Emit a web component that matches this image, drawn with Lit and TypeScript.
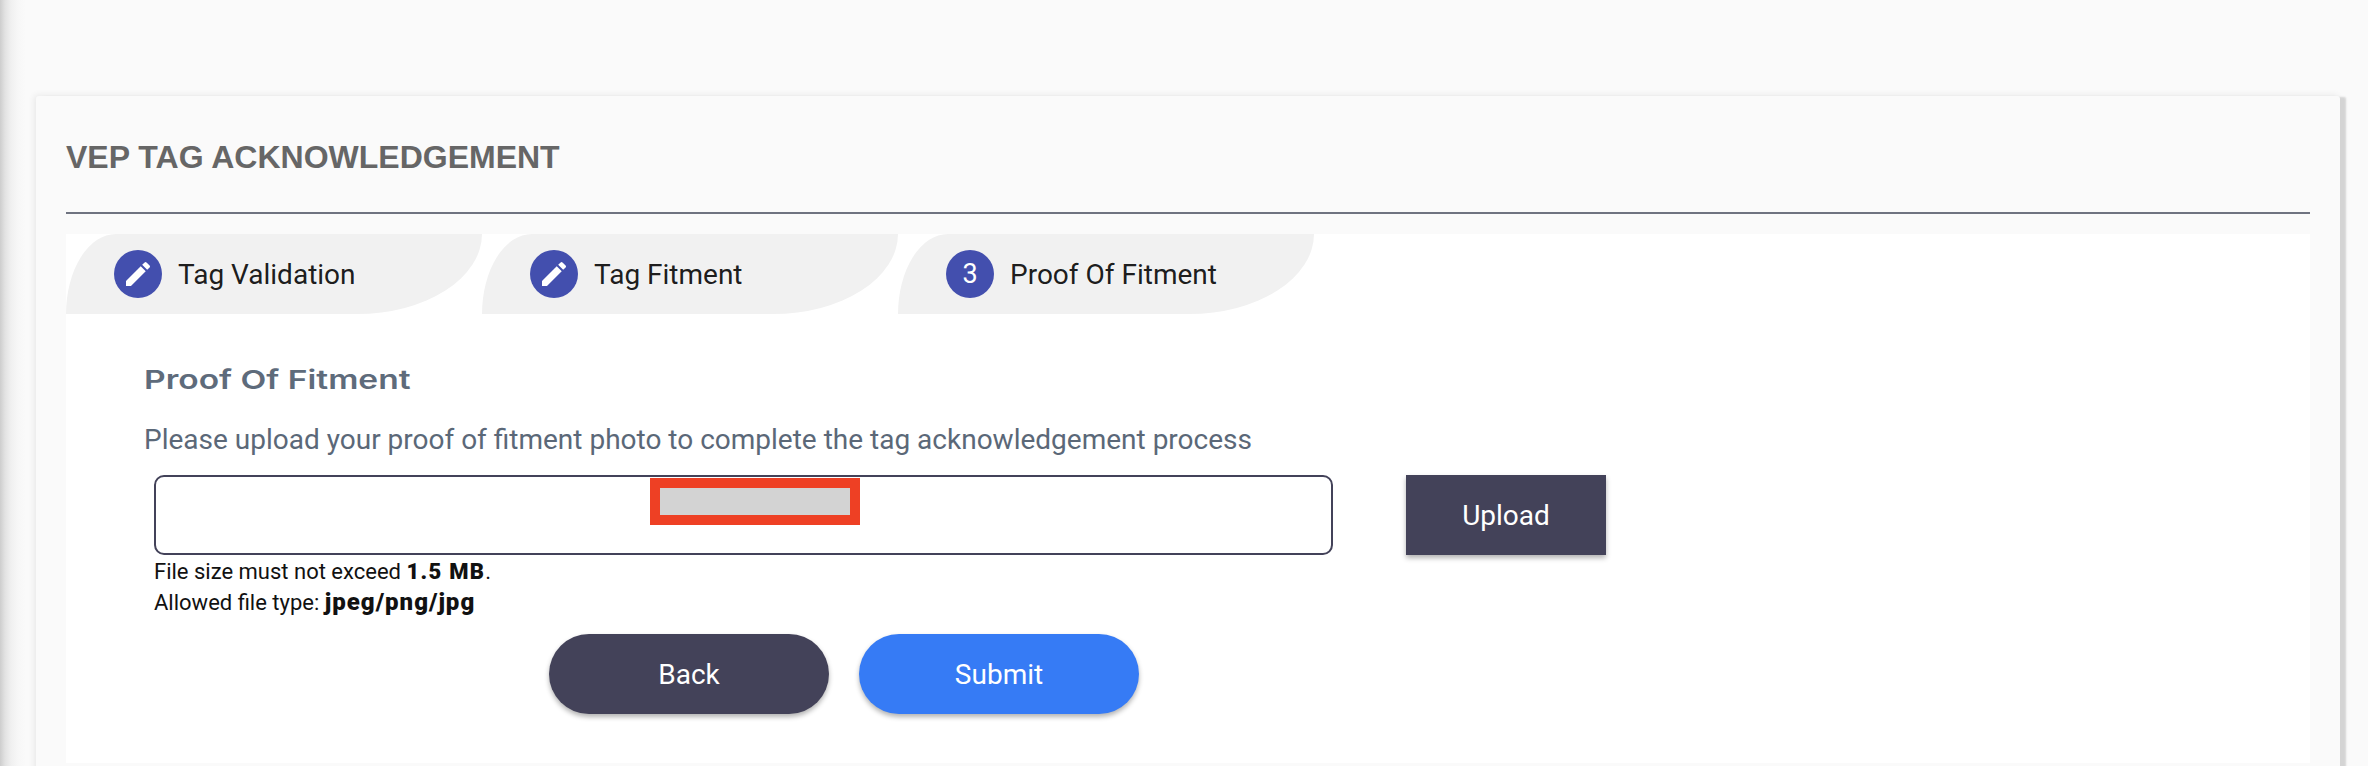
import { LitElement, html, css } from "lit";
import { customElement } from "lit/decorators.js";

const pencil = html`<svg viewBox="0 0 24 24" width="32" height="32"><path fill="#fff" d="M3 17.25V21h3.75L17.81 9.94l-3.75-3.75L3 17.25zM20.71 7.04a1 1 0 0 0 0-1.41l-2.34-2.34a1 1 0 0 0-1.41 0l-1.83 1.83 3.75 3.75 1.83-1.83z"/></svg>`;

@customElement("app-root")
export class AppRoot extends LitElement {
  static styles = css`
    :host { display: block; height: 766px; overflow: hidden; background: #fafafa; position: relative; font-family: Roboto, sans-serif; }
    .edge { position: absolute; left: 0; top: 0; bottom: 0; width: 26px; background: linear-gradient(90deg, #cdcdcd 0, #e2e2e2 5px, #f0f0f0 11px, #f7f7f7 18px, #fafafa 26px); }
    .page { position: relative; padding: 96px 21px 0 36px; }
    .card { box-sizing: border-box; width: 2304px; height: 700px; background: #fafafa; padding: 0 30px; border-radius: 3px 3px 0 0; box-shadow: 7px 0 2px -1px #d4d4d4, -2px -1px 6px rgba(0,0,0,.07); display: flex; flex-direction: column; }
    h1 { margin: 0; height: 118px; box-sizing: border-box; border-bottom: 2px solid #6f7380; padding-top: 37px; font: bold 32px/48px "Liberation Sans", sans-serif; color: #666; }
    .panel { margin-top: 20px; background: #fff; height: 529px; }
    .tabs { display: flex; }
    .tab { width: 416px; height: 80px; background: #f1f1f1; box-sizing: border-box; padding-left: 48px; display: flex; align-items: center; gap: 16px; border-radius: 50px 0 125px 0 / 80px 0 80px 0; color: rgba(0,0,0,.9); font-size: 28px; }
    .dot { width: 48px; height: 48px; border-radius: 50%; background: #434fae; color: #fff; display: flex; align-items: center; justify-content: center; font-size: 27px; }
    .body { padding: 48px 0 0 78px; }
    h2 { margin: 0; font: 600 26px/36px Inter, sans-serif; color: #5e6b7b; display: inline-block; transform: scaleX(1.29); transform-origin: left center; }
    .desc { margin: 22px 0 0; font-size: 28px; line-height: 40px; color: #5b6878; }
    .row { display: flex; margin: 15px 0 0 10px; gap: 73px; }
    .input { width: 1179px; height: 80px; box-sizing: border-box; border: 2px solid #434259; border-radius: 10px; position: relative; }
    .mask { position: absolute; left: 494px; top: 1px; width: 210px; height: 47px; box-sizing: border-box; border: 10px solid #ee4024; background: #d3d3d3; }
    .upload { width: 200px; height: 80px; border: 0; background: #434259; color: #fff; font: 400 28px Roboto, sans-serif; box-shadow: 0 3px 5px rgba(0,0,0,.3); }
    .note { margin: 2px 0 0 10px; font-size: 22px; line-height: 30px; color: #111; }
    .note b { font-weight: 900; letter-spacing: 1.3px; }
    .note b.big { font-size: 24px; letter-spacing: 1px; }
    .actions { display: flex; gap: 30px; margin: 16px 0 0 405px; }
    .pill { width: 280px; height: 80px; border: 0; border-radius: 40px; color: #fff; font: 400 28px Roboto, sans-serif; box-shadow: 0 3px 5px rgba(0,0,0,.3); background: #434259; }
    .pill.blue { background: #367bf5; }
  `;
  render() {
    return html`
      <div class="edge"></div>
      <div class="page"><div class="card">
        <h1>VEP TAG ACKNOWLEDGEMENT</h1>
        <div class="panel">
          <div class="tabs">
            <div class="tab"><span class="dot">${pencil}</span>Tag Validation</div>
            <div class="tab"><span class="dot">${pencil}</span>Tag Fitment</div>
            <div class="tab"><span class="dot">3</span>Proof Of Fitment</div>
          </div>
          <div class="body">
            <h2>Proof Of Fitment</h2>
            <p class="desc">Please upload your proof of fitment photo to complete the tag acknowledgement process</p>
            <div class="row">
              <div class="input"><div class="mask"></div></div>
              <button class="upload">Upload</button>
            </div>
            <div class="note">File size must not exceed <b>1.5 MB</b>.<br>Allowed file type: <b class="big">jpeg/png/jpg</b></div>
            <div class="actions">
              <button class="pill">Back</button>
              <button class="pill blue">Submit</button>
            </div>
          </div>
        </div>
      </div></div>
    `;
  }
}
